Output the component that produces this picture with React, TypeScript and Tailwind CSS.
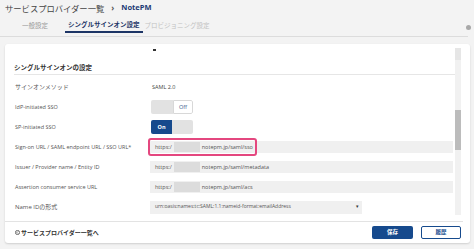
import React from "react";

const Blur = () => <span className="inline-block w-[26px] h-[10px] bg-[#dcdcdc] mx-[2px]" />;

function Row({ label, children }: { label: string; children: React.ReactNode }) {
  const jp = /[\u3040-\u30ff\u4e00-\u9fff]/.test(label);
  return (
    <div className="h-[20px] flex items-center">
      <div className={"w-[145px] pl-[10px] text-[#555] whitespace-nowrap " + (jp ? "text-[6px]" : "text-[5.5px]")}>{label}</div>
      <div className="flex-1 flex items-center pr-[2px]">{children}</div>
    </div>
  );
}

function UrlInput({ path, highlight }: { path: string; highlight?: boolean }) {
  return (
    <div className="relative flex-1 h-[12px] bg-[#f0f0f0] flex items-center pl-[5px] text-[5.5px] text-[#555]">
      <span>https:/</span>
      <Blur />
      <span>notepm.jp/saml/{path}</span>
      {highlight && (
        <div className="absolute left-[-2px] top-[-3px] w-[109px] h-[18px] border-2 border-[#e4477f] rounded-[3px]" />
      )}
    </div>
  );
}

export default function App() {
  return (
    <div className="relative w-[474px] h-[249px] overflow-hidden bg-[#f3f3f3] font-['Open_Sans','Noto_Sans_CJK_JP',sans-serif]">
      <div className="h-[16px] flex items-center pl-[5px] text-[8.3px] text-[#444]">
        <span className="font-['Noto_Sans_CJK_JP',sans-serif]">サービスプロバイダー一覧</span>
        <span className="ml-[7px] text-[#555] font-bold">›</span>
        <span className="ml-[7px] text-[7.5px] text-[#1c3a74] font-bold">NotePM</span>
      </div>
      <div className="h-[21px] mr-[6px] flex items-stretch border-b border-[#dcdcdc] text-[6.5px] font-['Noto_Sans_CJK_JP',sans-serif]">
        <div className="ml-[22px] flex items-center text-[#9a9a9a] pb-[1px]">一般設定</div>
        <div className="ml-[17px] flex flex-col justify-center">
          <div className="flex-1 flex items-center px-[3px] font-bold text-[#1d3566] pt-[2px]">シングルサインオン設定</div>
          <div className="h-[2px] bg-[#1d3566] mb-[3px]" />
        </div>
        <div className="ml-[2px] flex items-center text-[#c2c2c2] pb-[1px]">プロビジョニング設定</div>
      </div>
      <div className="absolute left-[466px] top-[25px] w-[5px] h-[5px] rounded-full bg-[#a8a8a8]" />

      <div className="mt-[7px] ml-[5px] w-[465px] h-[199px] bg-white rounded-[3px] shadow-[0_1px_2px_rgba(0,0,0,0.15)] flex flex-col">
        <div className="h-[177px] flex">
          <div className="flex-1 flex flex-col">
            <div className="h-[12px] relative">
              <div className="absolute left-[148px] top-[5px] w-[3px] h-[1.5px] bg-[#333]" />
            </div>
            <div className="h-[19px] ml-[9px] border-b border-[#e6e6e6] flex items-end pb-[2px] leading-[9px] text-[6.5px] font-bold text-[#333] font-['Noto_Sans_CJK_JP',sans-serif]">
              シングルサインオンの設定
            </div>
            <div className="mt-[2px]">
              <Row label="サインオンメソッド">
                <span className="ml-[2px] text-[5.5px] text-[#444]">SAML 2.0</span>
              </Row>
              <Row label="IdP-initiated SSO">
                <div className="ml-[1px] w-[42px] h-[14px] flex rounded-[2px] overflow-hidden">
                  <div className="w-[22px] bg-[#e2e2e2]" />
                  <div className="flex-1 border border-[#d8d8d8] rounded-r-[2px] flex items-center justify-center text-[5.5px] text-[#3a5688]">Off</div>
                </div>
              </Row>
              <Row label="SP-initiated SSO">
                <div className="ml-[1px] w-[42px] h-[14px] flex rounded-[2px] overflow-hidden">
                  <div className="w-[21px] bg-[#164a8d] flex items-center justify-center text-[5.5px] font-bold text-white">On</div>
                  <div className="flex-1 bg-[#e2e2e2]" />
                </div>
              </Row>
              <Row label="Sign-on URL / SAML endpoint URL / SSO URL*">
                <UrlInput path="sso" highlight />
              </Row>
              <Row label="Issuer / Provider name / Entity ID">
                <UrlInput path="metadata" />
              </Row>
              <Row label="Assertion consumer service URL">
                <UrlInput path="acs" />
              </Row>
              <Row label="Name IDの形式">
                <div className="w-[212px] h-[13px] bg-[#f0f0f0] flex items-center justify-between pl-[5px] pr-[3px] text-[5px] text-[#555]">
                  <span>urn:oasis:names:tc:SAML:1.1:nameid-format:emailAddress</span>
                  <span className="text-[5px] text-[#333]">▾</span>
                </div>
              </Row>
            </div>
          </div>
          <div className="w-[6px] mr-[9px] mt-[4px] mb-[6px] bg-[#f1f1f1] flex flex-col">
            <div className="h-[12px] bg-[#e6e6e6]" />
            <div className="h-[50px]" />
            <div className="h-[40px] bg-[#bcbcbc]" />
          </div>
        </div>
        <div className="h-px bg-[#e3e3e3] mr-[7px]" />
        <div className="flex-1 flex items-center pl-[10px] pr-[9px]">
          <svg width="5" height="5" viewBox="0 0 10 10" className="mr-[1px]">
            <circle cx="5" cy="5" r="4.2" fill="none" stroke="#333" strokeWidth="1.4" />
            <path d="M5.8 3 L3.8 5 L5.8 7" fill="none" stroke="#333" strokeWidth="1.4" />
          </svg>
          <span className="text-[6px] font-bold text-[#333] font-['Noto_Sans_CJK_JP',sans-serif]">サービスプロバイダー一覧へ</span>
          <div className="flex-1" />
          <button className="w-[41px] h-[13px] rounded-[2px] bg-[#164a8d] text-white text-[5.5px] font-bold flex items-center justify-center font-['Noto_Sans_CJK_JP',sans-serif]">保存</button>
          <button className="ml-[8px] w-[40px] h-[13px] rounded-[2px] border border-[#164a8d] bg-white text-[#164a8d] text-[5.5px] font-bold flex items-center justify-center font-['Noto_Sans_CJK_JP',sans-serif]">履歴</button>
        </div>
      </div>
    </div>
  );
}
